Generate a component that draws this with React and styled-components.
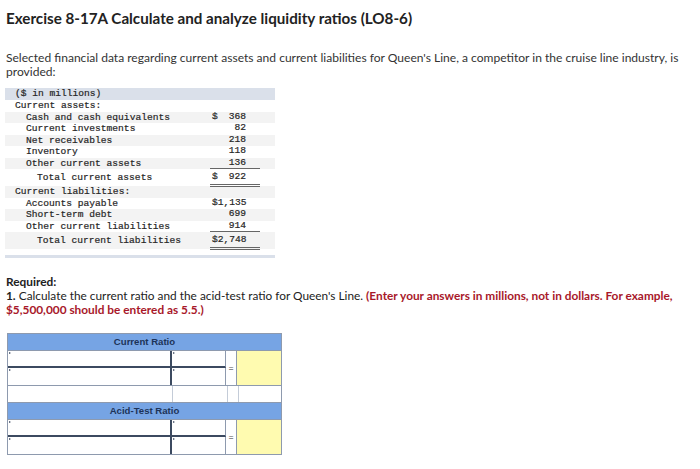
import React from "react";
import styled, { createGlobalStyle } from "styled-components";

const GlobalStyle = createGlobalStyle`
  body {
    margin: 0;
    background: #fff;
    font-family: "Lato", "Open Sans", sans-serif;
    color: #333;
  }
`;

const assets = [
  { label: "Cash and cash equivalents", sign: "$", value: "368" },
  { label: "Current investments", value: "82" },
  { label: "Net receivables", value: "218" },
  { label: "Inventory", value: "118" },
  { label: "Other current assets", value: "136", under: true },
];

const liabilities = [
  { label: "Accounts payable", value: "$1,135" },
  { label: "Short-term debt", value: "699" },
  { label: "Other current liabilities", value: "914", under: true },
];

const FinRow = ({ label, sign, value, indent = 0, shaded, under, total }) => (
  <StyledFinRow $shaded={shaded} $total={total}>
    <StyledFinLabel $indent={indent}>{label}</StyledFinLabel>
    <StyledAmount $under={under} $total={total}>
      <span>{sign}</span>
      <span>{value}</span>
    </StyledAmount>
  </StyledFinRow>
);

const RatioBlock = ({ title }) => (
  <>
    <StyledRatioHeader>{title}</StyledRatioHeader>
    <StyledRatioRow>
      <StyledFraction>
        <StyledInputCell $wide $top />
        <StyledInputCell $top />
        <StyledInputCell $wide />
        <StyledInputCell />
      </StyledFraction>
      <StyledEquals>=</StyledEquals>
      <StyledAnswer />
    </StyledRatioRow>
  </>
);

const App = () => {
  return (
    <StyledPage>
      <GlobalStyle />
      <StyledTitle>
        Exercise 8-17A Calculate and analyze liquidity ratios (LO8-6)
      </StyledTitle>

      <StyledIntro>
        Selected financial data regarding current assets and current
        liabilities for Queen's Line, a competitor in the cruise line industry,
        is provided:
      </StyledIntro>

      {/* Start financial data */}
      <StyledFinTable>
        <StyledFinHeader>($ in millions)</StyledFinHeader>
        <FinRow label="Current assets:" />
        {assets.map((row, i) => (
          <FinRow key={row.label} {...row} indent={1} shaded={i % 2 === 0} />
        ))}
        <FinRow label="Total current assets" sign="$" value="922" indent={2} total />
        <FinRow label="Current liabilities:" shaded />
        {liabilities.map((row, i) => (
          <FinRow key={row.label} {...row} indent={1} shaded={i % 2 === 1} />
        ))}
        <FinRow label="Total current liabilities" value="$2,748" indent={2} shaded total />
        <StyledFinFooter />
      </StyledFinTable>
      {/* End financial data */}

      <StyledRequired>
        <strong>Required:</strong>
        <p>
          <strong>1.</strong> Calculate the current ratio and the acid-test
          ratio for Queen's Line.{" "}
          <StyledNote>
            (Enter your answers in millions, not in dollars. For example,
          </StyledNote>
          <br />
          <StyledNote>$5,500,000 should be entered as 5.5.)</StyledNote>
        </p>
      </StyledRequired>

      {/* Start ratio worksheet */}
      <StyledRatioTable>
        <RatioBlock title="Current Ratio" />
        <StyledBlankRow>
          <StyledBlankCell $w={164} />
          <StyledBlankCell $w={54} />
          <StyledBlankCell $w={10} />
          <StyledBlankCell $w={45} $last />
        </StyledBlankRow>
        <RatioBlock title="Acid-Test Ratio" />
      </StyledRatioTable>
      {/* End ratio worksheet */}
    </StyledPage>
  );
};

export default App;

// ========= Start styled-components ==========
const StyledPage = styled.div`
  width: 700px;
  height: 469px;
  padding: 9px 6px 0;
  box-sizing: border-box;
  overflow: hidden;
`;
const StyledTitle = styled.h1`
  margin: 0;
  font-size: 15.2px;
  line-height: 19px;
  font-weight: 700;
  color: #222;
`;
const StyledIntro = styled.p`
  margin: 23px 0 0;
  font-size: 12.05px;
  line-height: 14px;
  color: #333;
`;
const StyledFinTable = styled.div`
  width: 270px;
  margin: 9px 0 0 -1px;
  font-family: "Liberation Mono", monospace;
  font-size: 9.6px;
  color: #262626;
  -webkit-text-stroke: 0.2px #262626;
`;
const StyledFinHeader = styled.div`
  height: 12px;
  line-height: 12px;
  padding-left: 10px;
  background: #dae0ea;
`;
const StyledFinRow = styled.div`
  display: flex;
  align-items: ${({ $total }) => ($total ? "flex-start" : "center")};
  height: ${({ $total }) => ($total ? "17px" : "11.5px")};
  padding-top: ${({ $total }) => ($total ? "3px" : "0")};
  box-sizing: border-box;
  background: ${({ $shaded }) => ($shaded ? "#f3f3f3" : "#fff")};
`;
const StyledFinLabel = styled.div`
  width: 205px;
  padding-left: ${({ $indent }) => 10 + $indent * 11}px;
  box-sizing: border-box;
  white-space: pre;
`;
const StyledAmount = styled.div`
  width: 50px;
  display: flex;
  justify-content: space-between;
  padding: 0 14px 0 2px;
  box-sizing: border-box;
  line-height: 10px;
  border-bottom: ${({ $under, $total }) =>
    $total ? "3px double #666" : $under ? "1px solid #666" : "1px solid transparent"};
  padding-bottom: ${({ $total }) => ($total ? "2px" : "0")};
`;
const StyledFinFooter = styled.div`
  height: 3px;
  margin-top: 6px;
  background: #dae0ea;
`;
const StyledRequired = styled.div`
  margin-top: 17px;
  font-size: 11.85px;
  line-height: 14px;
  color: #222;

  strong {
    font-weight: 700;
  }
  p {
    margin: 0;
  }
`;
const StyledNote = styled.span`
  color: #a8182a;
  font-weight: 700;
`;
const StyledRatioTable = styled.div`
  width: 273px;
  margin: 16px 0 0 1px;
  border: 1px solid #8e9aae;
  font-family: "Liberation Sans", Arial, sans-serif;
`;
const StyledRatioHeader = styled.div`
  height: 16px;
  line-height: 16px;
  text-align: center;
  background: #76a4e4;
  border-bottom: 1px solid #8e9aae;
  font-size: 9.6px;
  font-weight: 700;
  color: #1d3358;
`;
const StyledRatioRow = styled.div`
  display: flex;
  height: 34px;
`;
const StyledFraction = styled.div`
  display: grid;
  grid-template-columns: 164px 54px;
  grid-template-rows: 17px 17px;
`;
const StyledInputCell = styled.div`
  position: relative;
  background: #fff;
  box-sizing: border-box;
  border-right: ${({ $wide }) => ($wide ? "2px solid #3c4a60" : "1px solid #8e9aae")};
  border-bottom: ${({ $top }) => ($top ? "2px solid #3c4a60" : "none")};

  &::before {
    content: "";
    position: absolute;
    left: 1px;
    top: 1px;
    border-left: 2px solid #3c4a60;
    border-top: 1.5px solid transparent;
    border-bottom: 1.5px solid transparent;
  }
`;
const StyledEquals = styled.div`
  width: 10px;
  display: flex;
  align-items: center;
  justify-content: center;
  border-right: 1px solid #8e9aae;
  font-size: 8px;
  font-weight: 700;
  color: #8a8a8a;
`;
const StyledAnswer = styled.div`
  flex: 1;
  background: #fffbb0;
`;
const StyledBlankRow = styled.div`
  display: flex;
  height: 16px;
  border-top: 1px solid #8e9aae;
  border-bottom: 1px solid #8e9aae;
`;
const StyledBlankCell = styled.div`
  width: ${({ $w }) => $w}px;
  flex: ${({ $last }) => ($last ? 1 : "none")};
  border-right: ${({ $last }) => ($last ? "none" : "1px solid #c4ccd8")};
`;
// ========= End styled-components ==========
